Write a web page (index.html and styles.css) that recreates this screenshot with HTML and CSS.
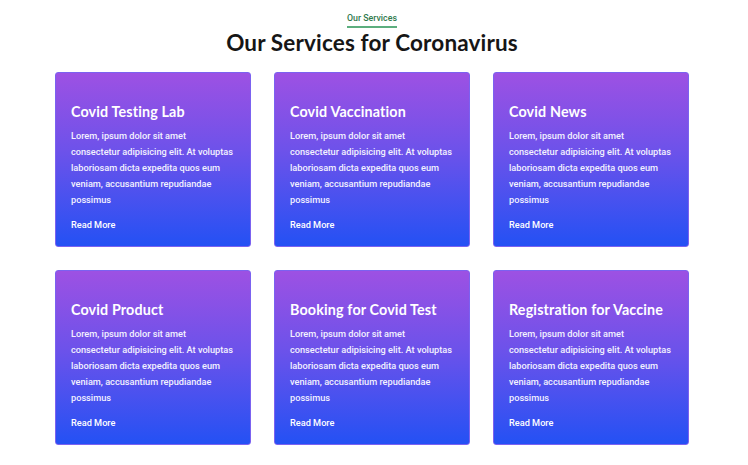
FILE: index.html
```html
<!DOCTYPE html>
<html>
<head>
<meta charset="utf-8">
<link rel="stylesheet" href="styles.css">
</head>
<body>
<section class="services">
  <div class="head">
    <span class="eyebrow">Our Services</span>
    <h2 class="title">Our Services for Coronavirus</h2>
  </div>
  <div class="grid">
    <div class="card">
      <h3>Covid Testing Lab</h3>
      <p>Lorem, ipsum dolor sit amet consectetur adipisicing elit. At voluptas laboriosam dicta expedita quos eum veniam, accusantium repudiandae possimus</p>
      <a class="more">Read More</a>
    </div>
    <div class="card">
      <h3>Covid Vaccination</h3>
      <p>Lorem, ipsum dolor sit amet consectetur adipisicing elit. At voluptas laboriosam dicta expedita quos eum veniam, accusantium repudiandae possimus</p>
      <a class="more">Read More</a>
    </div>
    <div class="card">
      <h3>Covid News</h3>
      <p>Lorem, ipsum dolor sit amet consectetur adipisicing elit. At voluptas laboriosam dicta expedita quos eum veniam, accusantium repudiandae possimus</p>
      <a class="more">Read More</a>
    </div>
    <div class="card">
      <h3>Covid Product</h3>
      <p>Lorem, ipsum dolor sit amet consectetur adipisicing elit. At voluptas laboriosam dicta expedita quos eum veniam, accusantium repudiandae possimus</p>
      <a class="more">Read More</a>
    </div>
    <div class="card">
      <h3>Booking for Covid Test</h3>
      <p>Lorem, ipsum dolor sit amet consectetur adipisicing elit. At voluptas laboriosam dicta expedita quos eum veniam, accusantium repudiandae possimus</p>
      <a class="more">Read More</a>
    </div>
    <div class="card">
      <h3>Registration for Vaccine</h3>
      <p>Lorem, ipsum dolor sit amet consectetur adipisicing elit. At voluptas laboriosam dicta expedita quos eum veniam, accusantium repudiandae possimus</p>
      <a class="more">Read More</a>
    </div>
  </div>
</section>
</body>
</html>
```
FILE: styles.css
```css
* { box-sizing: border-box; }
html, body { margin: 0; padding: 0; background: #fff; }
body { font-family: "Lato", "Noto Sans", sans-serif; color: #1a1a1a; }
.services { width: 634px; margin: 0 0 0 55px; padding-top: 13px; }
.head { display: flex; flex-direction: column; align-items: center; }
.eyebrow {
  font-family: "Roboto", "Noto Sans", sans-serif;
  font-size: 8.8px; font-weight: 500; color: #2f7a4c;
  padding-bottom: 2px; border-bottom: 2px solid #5cae7e; line-height: 11px;
}
.title {
  margin: 1px 0 0; font-size: 22.5px; font-weight: 700; color: #161616;
  line-height: 28px; letter-spacing: 0.15px;
}
.grid {
  display: grid; grid-template-columns: repeat(3, 196px);
  column-gap: 23px; row-gap: 23px; margin-top: 15px;
}
.card {
  height: 175px; border-radius: 3px; padding: 29px 13px 0 15px;
  background: linear-gradient(180deg, #9d51e3 0%, #6d52ea 45%, #2451f4 100%);
  border: 1px solid #7b62f0;
  color: #fff;
}
.card h3 {
  margin: 0; font-size: 14.3px; font-weight: 700; line-height: 20px; letter-spacing: 0.15px;
}
.card p {
  margin: 6px 0 0; font-family: "Roboto", "Noto Sans", sans-serif;
  font-size: 9.2px; font-weight: 500; line-height: 16px; color: #f4f2ff;
}
.more {
  display: block; margin-top: 11px; font-family: "Roboto", "Noto Sans", sans-serif;
  font-size: 9.2px; font-weight: 500; line-height: 12px; color: #fff;
}
```
